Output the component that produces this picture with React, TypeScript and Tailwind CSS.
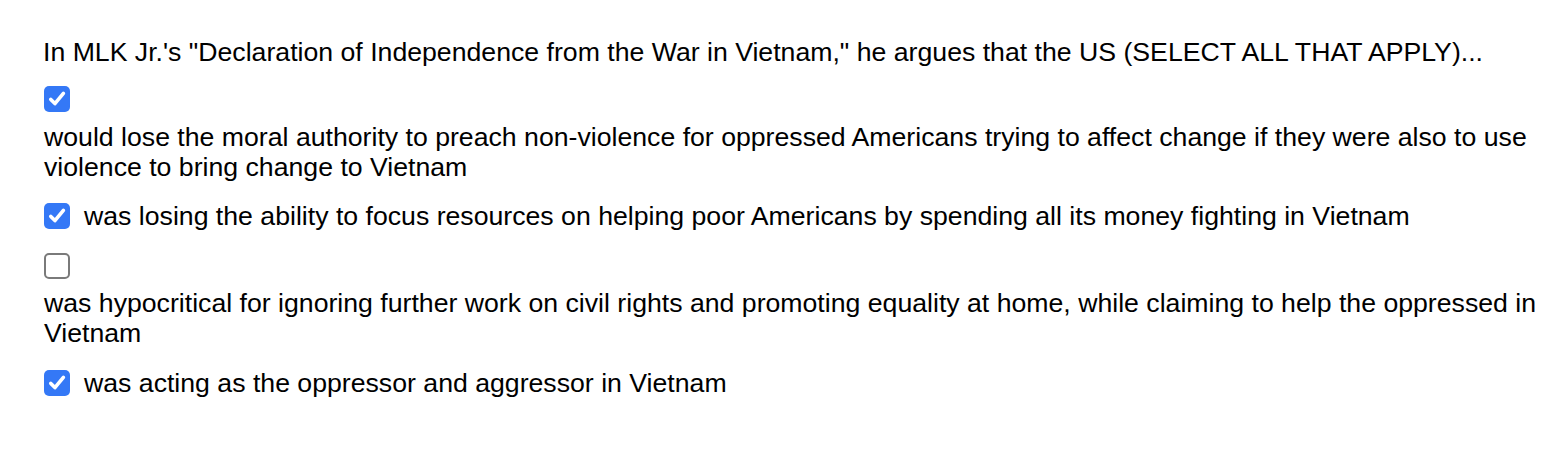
const Box: React.FC<{ checked: boolean }> = ({ checked }) =>
  checked ? (
    <span className="block w-[26px] h-[26px] shrink-0 rounded-[5px] bg-[#3478f6]">
      <svg width="26" height="26" viewBox="0 0 26 26" fill="none">
        <path d="M6.8 13.4 L10.9 17.6 L19.4 7.4" stroke="white" strokeWidth="3.6" strokeLinecap="round" strokeLinejoin="round" />
      </svg>
    </span>
  ) : (
    <span className="block w-[26px] h-[26px] shrink-0 rounded-[5px] border-2 border-[#7a7a7a] bg-white" />
  );

export default function App() {
  return (
    <div className="min-h-[466px] bg-white pt-[37px] pl-[44px] pr-[10px] text-[26.67px] leading-[30.67px] text-black font-['Liberation_Sans',Arial,sans-serif]">
      <p className="-ml-px">
        In MLK Jr.'s "Declaration of Independence from the War in Vietnam," he argues that the US (SELECT ALL THAT APPLY)...
      </p>
      <div className="mt-[18px]">
        <Box checked />
      </div>
      <p className="mt-[10px]">
        would lose the moral authority to preach non-violence for oppressed Americans trying to affect change if they were also to use violence to bring change to Vietnam
      </p>
      <div className="mt-[18px] flex items-center gap-[14px]">
        <Box checked />
        <span>was losing the ability to focus resources on helping poor Americans by spending all its money fighting in Vietnam</span>
      </div>
      <div className="mt-[21px]">
        <Box checked={false} />
      </div>
      <p className="mt-[9px]">
        was hypocritical for ignoring further work on civil rights and promoting equality at home, while claiming to help the oppressed in Vietnam
      </p>
      <div className="mt-[19px] flex items-center gap-[14px]">
        <Box checked />
        <span>was acting as the oppressor and aggressor in Vietnam</span>
      </div>
    </div>
  );
}
